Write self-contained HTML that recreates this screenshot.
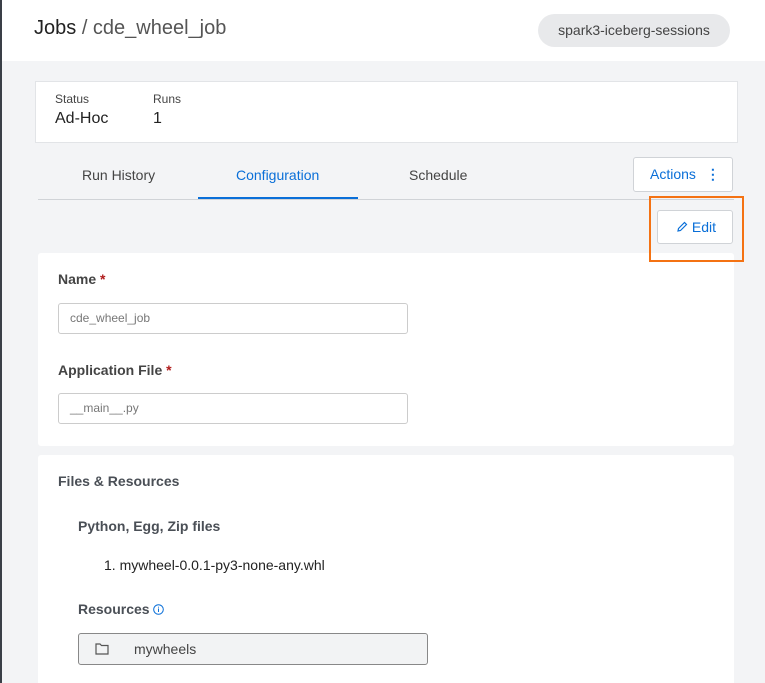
<!DOCTYPE html><html><head><style>
html,body{margin:0;width:765px;height:683px;overflow:hidden}
body{background:#f3f4f6;font-family:"Liberation Sans",sans-serif;position:relative}
.a{position:absolute}
</style></head><body>
<div class="a" style="left:0;top:0;width:2px;height:683px;background:#3a3f47"></div>
<div class="a" style="left:2px;top:0;width:763px;height:61px;background:#fff"></div>
<div class="a" style="left:34px;top:17px;font-size:20px;color:#222">Jobs <span style="color:#555">/ cde_wheel_job</span></div>
<div class="a" style="left:538px;top:14px;width:192px;height:33px;border-radius:17px;background:#e8e9eb;font-size:14px;color:#444;line-height:33px;text-align:center">spark3-iceberg-sessions</div>
<div class="a" style="left:35px;top:81px;width:701px;height:60px;background:#fff;border:1px solid #e2e4e7"></div>
<div class="a" style="left:55px;top:92px;font-size:12px;color:#444">Status</div>
<div class="a" style="left:55px;top:110px;font-size:16px;color:#222">Ad-Hoc</div>
<div class="a" style="left:153px;top:92px;font-size:12px;color:#444">Runs</div>
<div class="a" style="left:153px;top:110px;font-size:16px;color:#222">1</div>
<div class="a" style="left:38px;top:199px;width:696px;height:1px;background:#d0d3d7"></div>
<div class="a" style="left:82px;top:167px;font-size:14px;color:#444">Run History</div>
<div class="a" style="left:236px;top:167px;font-size:14px;color:#0a6fd8">Configuration</div>
<div class="a" style="left:198px;top:197px;width:160px;height:2px;background:#0a6fd8"></div>
<div class="a" style="left:409px;top:167px;font-size:14px;color:#444">Schedule</div>
<div class="a" style="left:633px;top:157px;width:100px;height:35px;background:#fff;border:1px solid #d0d3d7;border-radius:3px;box-sizing:border-box;font-size:14px;color:#0a6fd8;line-height:32px;padding-left:16px">Actions <span style="margin-left:6px;font-weight:bold">⋮</span></div>
<div class="a" style="left:657px;top:210px;width:76px;height:34px;background:#fff;border:1px solid #d0d3d7;border-radius:3px;box-sizing:border-box;font-size:14px;color:#0a6fd8;line-height:32px;padding-left:18px"><svg width="12" height="12" viewBox="0 0 12 12" style="vertical-align:-1px"><path d="M2 10l.5-2.5L8.5 1.5l2 2-6 6z" fill="none" stroke="#0a6fd8" stroke-width="1.2"/></svg> Edit</div>
<div class="a" style="left:38px;top:253px;width:696px;height:193px;background:#fff;border-radius:3px"></div>
<div class="a" style="left:649px;top:196px;width:91px;height:62px;border:2px solid #f47213"></div>
<div class="a" style="left:58px;top:271px;font-size:14px;font-weight:bold;color:#444">Name <span style="color:#b01c1c">*</span></div>
<div class="a" style="left:58px;top:303px;width:350px;height:31px;border:1px solid #ccc;border-radius:3px;box-sizing:border-box;font-size:12px;color:#777;line-height:29px;padding-left:11px">cde_wheel_job</div>
<div class="a" style="left:58px;top:362px;font-size:14px;font-weight:bold;color:#444">Application File <span style="color:#b01c1c">*</span></div>
<div class="a" style="left:58px;top:393px;width:350px;height:31px;border:1px solid #ccc;border-radius:3px;box-sizing:border-box;font-size:12px;color:#777;line-height:29px;padding-left:11px">__main__.py</div>
<div class="a" style="left:38px;top:455px;width:696px;height:228px;background:#fff;border-radius:3px 3px 0 0"></div>
<div class="a" style="left:58px;top:473px;font-size:14px;font-weight:bold;color:#4a4f56">Files &amp; Resources</div>
<div class="a" style="left:78px;top:518px;font-size:14px;font-weight:bold;color:#4a4f56">Python, Egg, Zip files</div>
<div class="a" style="left:104px;top:557px;font-size:14px;color:#222">1. mywheel-0.0.1-py3-none-any.whl</div>
<div class="a" style="left:78px;top:601px;font-size:14px;font-weight:bold;color:#4a4f56">Resources <svg width="11" height="11" viewBox="0 0 11 11" style="vertical-align:-1px"><circle cx="5.5" cy="5.5" r="4.8" fill="none" stroke="#0a6fd8"/><path d="M5.5 4.5v3.5M5.5 2.8v.8" stroke="#0a6fd8"/></svg></div>
<div class="a" style="left:78px;top:633px;width:350px;height:32px;border:1px solid #888;border-radius:3px;box-sizing:border-box;background:#f2f3f4;font-size:14px;color:#444;line-height:30px;padding-left:55px">mywheels</div>
<svg class="a" style="left:95px;top:643px" width="14" height="12" viewBox="0 0 14 12"><path d="M1 1h4l1.5 1.5H13V11H1z" fill="none" stroke="#555" stroke-width="1.2"/></svg>
</body></html>
